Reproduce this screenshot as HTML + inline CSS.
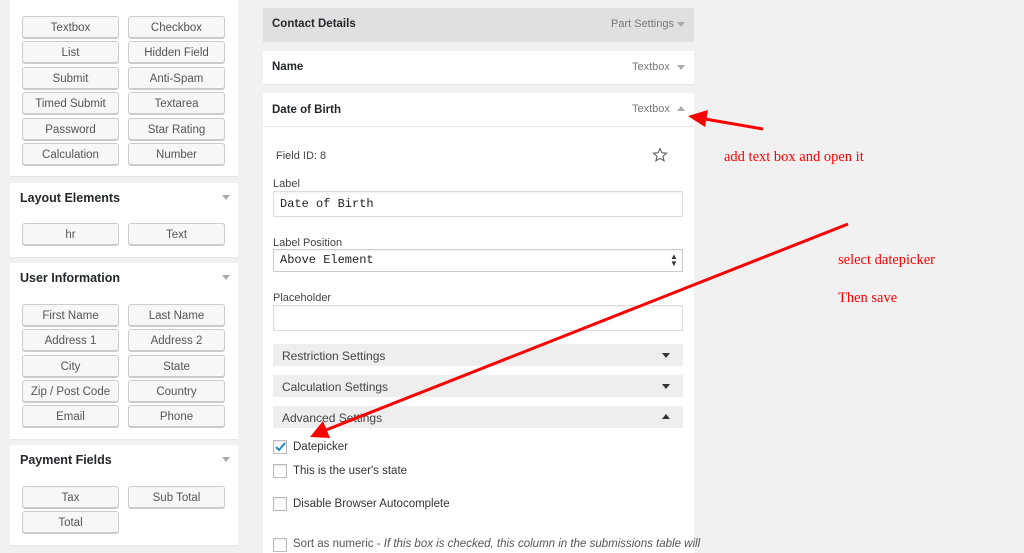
<!DOCTYPE html><html><head><meta charset="utf-8"><style>
*{box-sizing:border-box;margin:0;padding:0}
html,body{width:1024px;height:542px}
body{background:#f1f1f1;font-family:"Liberation Sans",sans-serif;color:#333;position:relative;overflow:hidden;font-size:12px}
.a{position:absolute}
.p{position:absolute;left:10px;width:228px;background:#fff;box-shadow:0 1px 1px rgba(0,0,0,.05)}
.b{position:absolute;width:97px;height:22px;border:1px solid #ccc;border-radius:3px;background:#f7f7f7;box-shadow:0 1px 0 #ccc;text-align:center;line-height:22px;font-size:11.5px;color:#555}
.h{position:absolute;left:10px;font-weight:bold;font-size:12.5px;color:#23282d}
.tri{position:absolute;width:0;height:0;border-left:4px solid transparent;border-right:4px solid transparent;border-top:5px solid #aaa}
.triu{position:absolute;width:0;height:0;border-left:4px solid transparent;border-right:4px solid transparent;border-bottom:5px solid #aaa}
.bar{position:absolute;left:273px;width:410px;height:22px;background:#eee;font-size:12px;color:#444;line-height:24px;padding-left:9px}
.cb{position:absolute;left:273px;width:14px;height:14px;border:1px solid #bbb;background:#fff;box-shadow:inset 0 1px 2px rgba(0,0,0,.1)}
.lbl{position:absolute;left:293px;font-size:11.5px;color:#333}
.in{position:absolute;left:273px;width:410px;height:26px;border:1px solid #ddd;background:#fff;box-shadow:inset 0 1px 2px rgba(0,0,0,.07);font-family:"Liberation Mono",monospace;font-size:12px;line-height:24px;padding-left:6px;color:#222}
.red{position:absolute;color:#f00;font-family:"Liberation Serif",serif;font-size:14.5px}
</style></head><body>
<div class="p" style="top:-2px;height:178px"></div>
<div class="b" style="left:22px;top:16px">Textbox</div><div class="b" style="left:128px;top:16px">Checkbox</div>
<div class="b" style="left:22px;top:41px">List</div><div class="b" style="left:128px;top:41px">Hidden Field</div>
<div class="b" style="left:22px;top:67px">Submit</div><div class="b" style="left:128px;top:67px">Anti-Spam</div>
<div class="b" style="left:22px;top:92px">Timed Submit</div><div class="b" style="left:128px;top:92px">Textarea</div>
<div class="b" style="left:22px;top:118px">Password</div><div class="b" style="left:128px;top:118px">Star Rating</div>
<div class="b" style="left:22px;top:143px">Calculation</div><div class="b" style="left:128px;top:143px">Number</div>

<div class="p" style="top:183px;height:74px"><div class="h" style="top:8px">Layout Elements</div><div class="tri" style="left:212px;top:12px"></div></div>
<div class="b" style="left:22px;top:223px">hr</div><div class="b" style="left:128px;top:223px">Text</div>

<div class="p" style="top:263px;height:176px"><div class="h" style="top:8px">User Information</div><div class="tri" style="left:212px;top:12px"></div></div>
<div class="b" style="left:22px;top:304px">First Name</div><div class="b" style="left:128px;top:304px">Last Name</div>
<div class="b" style="left:22px;top:329px">Address 1</div><div class="b" style="left:128px;top:329px">Address 2</div>
<div class="b" style="left:22px;top:355px">City</div><div class="b" style="left:128px;top:355px">State</div>
<div class="b" style="left:22px;top:380px">Zip / Post Code</div><div class="b" style="left:128px;top:380px">Country</div>
<div class="b" style="left:22px;top:405px">Email</div><div class="b" style="left:128px;top:405px">Phone</div>

<div class="p" style="top:445px;height:100px"><div class="h" style="top:8px">Payment Fields</div><div class="tri" style="left:212px;top:12px"></div></div>
<div class="b" style="left:22px;top:486px">Tax</div><div class="b" style="left:128px;top:486px">Sub Total</div>
<div class="b" style="left:22px;top:511px">Total</div>

<div class="a" style="left:263px;top:8px;width:431px;height:34px;background:#e0e0e0"></div>
<div class="a" style="left:272px;top:18px;font-weight:bold;font-size:11.5px;color:#23282d">Contact Details</div>
<div class="a" style="left:611px;top:18px;font-size:11px;color:#777">Part Settings</div><div class="tri" style="left:677px;top:22px"></div>

<div class="a" style="left:263px;top:51px;width:431px;height:33px;background:#fff;box-shadow:0 1px 1px rgba(0,0,0,.06)"></div>
<div class="a" style="left:272px;top:61px;font-weight:bold;font-size:11.5px;color:#23282d">Name</div>
<div class="a" style="left:632px;top:61px;font-size:11px;color:#777">Textbox</div><div class="tri" style="left:677px;top:65px"></div>

<div class="a" style="left:263px;top:93px;width:431px;height:460px;background:#fff"></div>
<div class="a" style="left:263px;top:126px;width:431px;height:1px;background:#e5e5e5"></div>
<div class="a" style="left:272px;top:104px;font-weight:bold;font-size:11.5px;color:#23282d">Date of Birth</div>
<div class="a" style="left:632px;top:103px;font-size:11px;color:#777">Textbox</div><div class="triu" style="left:677px;top:106px"></div>

<div class="a" style="left:276px;top:150px;font-size:11px;color:#444">Field ID: 8</div>
<svg class="a" style="left:652px;top:147px" width="16" height="16" viewBox="0 0 16 16"><path d="M8 1.5l1.9 4.3 4.6.4-3.5 3 1.1 4.6L8 11.3l-4.1 2.5 1.1-4.6-3.5-3 4.6-.4z" fill="none" stroke="#555" stroke-width="1"/></svg>
<div class="a" style="left:273px;top:178px;font-size:11px;color:#444">Label</div>
<div class="in" style="top:191px">Date of Birth</div>
<div class="a" style="left:273px;top:237px;font-size:11px;color:#444">Label Position</div>
<div class="in" style="top:249px;height:23px;line-height:21px;border-color:#ccc">Above Element</div>
<div class="a" style="left:670px;top:253px;font-size:8px;line-height:7px;color:#333">▲<br>▼</div>
<div class="a" style="left:273px;top:292px;font-size:11px;color:#444">Placeholder</div>
<div class="in" style="top:305px"></div>

<div class="bar" style="top:344px">Restriction Settings</div><div class="tri" style="left:662px;top:353px;border-top-color:#333"></div>
<div class="bar" style="top:375px">Calculation Settings</div><div class="tri" style="left:662px;top:384px;border-top-color:#333"></div>
<div class="bar" style="top:406px">Advanced Settings</div><div class="triu" style="left:662px;top:414px;border-bottom-color:#333"></div>

<div class="cb" style="top:440px"></div>
<svg class="a" style="left:274px;top:441px" width="13" height="12"><path d="M2 6l3 3 6-7" fill="none" stroke="#1e8cbe" stroke-width="2"/></svg>
<div class="lbl" style="top:441px">Datepicker</div>
<div class="cb" style="top:464px"></div><div class="lbl" style="top:465px">This is the user's state</div>
<div class="cb" style="top:497px"></div><div class="lbl" style="top:498px">Disable Browser Autocomplete</div>
<div class="cb" style="top:538px"></div><div class="lbl" style="top:538px;color:#555">Sort as numeric - <i>If this box is checked, this column in the submissions table will</i></div>

<div class="red" style="left:724px;top:149px">add text box and open it</div>
<div class="red" style="left:838px;top:252px">select datepicker</div>
<div class="red" style="left:838px;top:290px">Then save</div>

<svg class="a" style="left:0;top:0" width="1024" height="542">
<line x1="763" y1="129" x2="705" y2="119" stroke="#f00" stroke-width="3"/>
<polygon points="688,116 708,110 705,127" fill="#f00"/>
<line x1="848" y1="224" x2="326" y2="430" stroke="#f00" stroke-width="3"/>
<polygon points="310,437 323,421 330,438" fill="#f00"/>
</svg>
</body></html>
